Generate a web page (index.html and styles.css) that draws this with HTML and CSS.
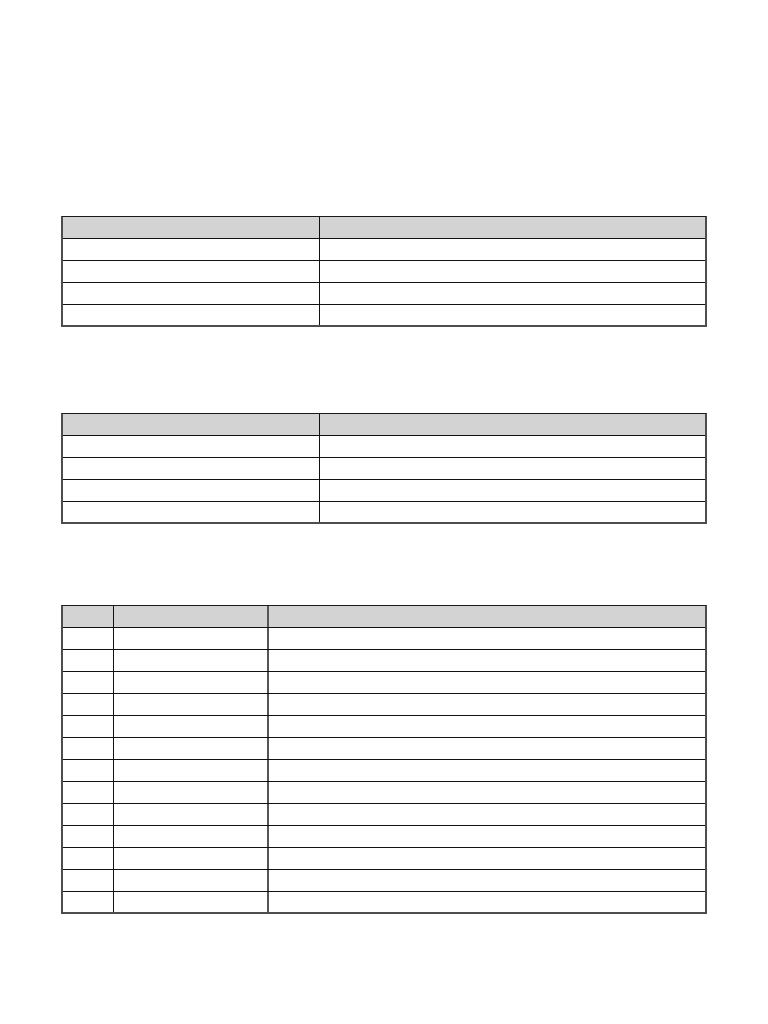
FILE: index.html
```html
<!DOCTYPE html>
<html>
<head>
<meta charset="utf-8">
<link rel="stylesheet" href="styles.css">
</head>
<body>
<div class="page">
  <div class="tbl t1">
    <div class="row head two"><div class="cell"></div><div class="cell"></div></div>
    <div class="row two"><div class="cell"></div><div class="cell"></div></div>
    <div class="row two"><div class="cell"></div><div class="cell"></div></div>
    <div class="row two"><div class="cell"></div><div class="cell"></div></div>
    <div class="row two"><div class="cell"></div><div class="cell"></div></div>
  </div>
  <div class="tbl t2">
    <div class="row head two"><div class="cell"></div><div class="cell"></div></div>
    <div class="row two"><div class="cell"></div><div class="cell"></div></div>
    <div class="row two"><div class="cell"></div><div class="cell"></div></div>
    <div class="row two"><div class="cell"></div><div class="cell"></div></div>
    <div class="row two"><div class="cell"></div><div class="cell"></div></div>
  </div>
  <div class="tbl t3">
    <div class="row head three"><div class="cell"></div><div class="cell gray"></div><div class="cell"></div></div>
    <div class="row three"><div class="cell"></div><div class="cell gray"></div><div class="cell"></div></div>
    <div class="row three"><div class="cell"></div><div class="cell gray"></div><div class="cell"></div></div>
    <div class="row three"><div class="cell"></div><div class="cell gray"></div><div class="cell"></div></div>
    <div class="row three"><div class="cell"></div><div class="cell gray"></div><div class="cell"></div></div>
    <div class="row three"><div class="cell"></div><div class="cell gray"></div><div class="cell"></div></div>
    <div class="row three"><div class="cell"></div><div class="cell gray"></div><div class="cell"></div></div>
    <div class="row three"><div class="cell"></div><div class="cell gray"></div><div class="cell"></div></div>
    <div class="row three"><div class="cell"></div><div class="cell gray"></div><div class="cell"></div></div>
    <div class="row three"><div class="cell"></div><div class="cell gray"></div><div class="cell"></div></div>
    <div class="row three"><div class="cell"></div><div class="cell gray"></div><div class="cell"></div></div>
    <div class="row three"><div class="cell"></div><div class="cell gray"></div><div class="cell"></div></div>
    <div class="row three"><div class="cell"></div><div class="cell gray"></div><div class="cell"></div></div>
    <div class="row three"><div class="cell"></div><div class="cell gray"></div><div class="cell"></div></div>
  </div>
</div>
</body>
</html>
```

FILE: styles.css
```css
html, body {
  margin: 0;
  padding: 0;
  background: #ffffff;
  font-family: "Liberation Sans", Arial, sans-serif;
}

.page {
  margin-left: 61px;
  width: 646px;
  padding-top: 216px;
}

.tbl {
  box-sizing: border-box;
  border-top: 1px solid #1a1a1a;
  border-left: 2px solid #4d4d4d;
  border-right: 2px solid #4d4d4d;
  border-bottom: 2px solid #4d4d4d;
}

.t2 { margin-top: 86px; }
.t3 { margin-top: 81px; }

.row {
  display: grid;
  box-sizing: border-box;
  height: 22px;
  border-bottom: 1px solid #111;
}

.row:last-child {
  height: 20px;
  border-bottom: none;
}

.two { grid-template-columns: 257px 1fr; }
.three { grid-template-columns: 51px 155px 1fr; }

.head { background: #d3d3d3; }

.cell {
  box-sizing: border-box;
  border-right: 1px solid #111;
}

.cell.gray {
  border-right: 2px solid #555;
}

.cell:last-child { border-right: none; }
```
